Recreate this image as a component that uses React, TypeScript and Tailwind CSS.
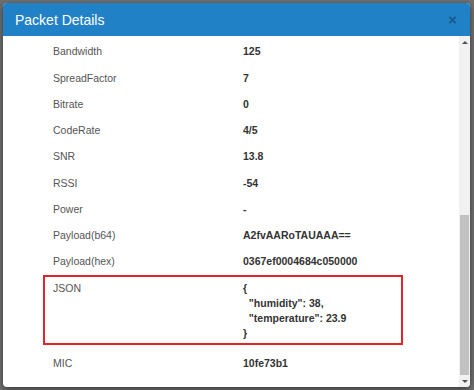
const rows: [string, string][] = [
  ["Bandwidth", "125"],
  ["SpreadFactor", "7"],
  ["Bitrate", "0"],
  ["CodeRate", "4/5"],
  ["SNR", "13.8"],
  ["RSSI", "-54"],
  ["Power", "-"],
  ["Payload(b64)", "A2fvAARoTAUAAA=="],
  ["Payload(hex)", "0367ef0004684c050000"],
]

const jsonLines = ["{", '  "humidity": 38,', '  "temperature": 23.9', "}"]

const Row = ({ label, value }: { label: string; value: string }) => (
  <div className="flex items-center h-[26.25px] pt-[2px]">
    <div className="w-[240px] pl-[50px] text-[#555]">{label}</div>
    <div className="font-bold text-[#333]">{value}</div>
  </div>
)

export default function App() {
  return (
    <div
      className="w-[474px] h-[390px] bg-[#6f6f6f] overflow-hidden pt-[3px] pl-[3px]"
      style={{ fontFamily: '"Liberation Sans", Arial, sans-serif' }}
    >
      <div className="w-[467px] h-[384px] bg-white rounded-[4px] overflow-hidden flex flex-col shadow-[0_2px_6px_rgba(0,0,0,0.5)]">
        <div className="h-[33px] shrink-0 bg-[#2181c6] flex items-center justify-between pl-[12px] pr-[13px]">
          <span className="text-white text-[14px] leading-none">Packet Details</span>
          <span className="text-[#1a5a8a] text-[15px] font-bold leading-none">×</span>
        </div>
        <div className="flex flex-1 min-h-0">
          <div className="flex-1 overflow-hidden pt-[2px] text-[10.5px]">
            {rows.map(([l, v]) => (
              <Row key={l} label={l} value={v} />
            ))}
            <div className="mt-[1px] ml-[40px] w-[360px] border-2 border-[#e3242b] flex pt-[4px] pb-[2px] leading-[15px]">
              <div className="w-[198px] pl-[8px] text-[#555]">JSON</div>
              <div className="font-bold text-[#333] whitespace-pre">
                {jsonLines.map((line, i) => (
                  <div key={i}>{line}</div>
                ))}
              </div>
            </div>
            <div className="mt-[4px]">
              <Row label="MIC" value="10fe73b1" />
            </div>
          </div>
          <div className="w-[11px] shrink-0 bg-[#f1f1f1] flex flex-col items-center">
            <div className="h-[12px] flex items-center justify-center">
              <div className="w-0 h-0 border-l-[3px] border-r-[3px] border-b-[3px] border-l-transparent border-r-transparent border-b-[#505050]" />
            </div>
            <div className="h-[167px]" />
            <div className="w-[9px] flex-1 bg-[#c1c1c1]" />
            <div className="h-[12px] flex items-center justify-center">
              <div className="w-0 h-0 border-l-[3px] border-r-[3px] border-t-[3px] border-l-transparent border-r-transparent border-t-[#505050]" />
            </div>
          </div>
        </div>
      </div>
    </div>
  )
}
